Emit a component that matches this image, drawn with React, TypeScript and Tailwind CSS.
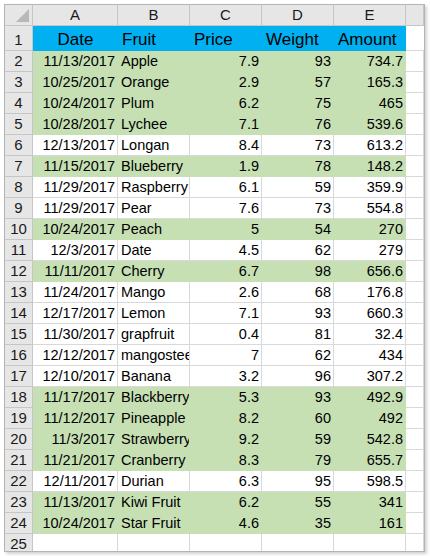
import React from 'react';

type Row = [string, string, string, string, string, boolean];

// date, fruit, price, weight, amount, highlighted
const rows: Row[] = [
  ['11/13/2017', 'Apple', '7.9', '93', '734.7', true],
  ['10/25/2017', 'Orange', '2.9', '57', '165.3', true],
  ['10/24/2017', 'Plum', '6.2', '75', '465', true],
  ['10/28/2017', 'Lychee', '7.1', '76', '539.6', true],
  ['12/13/2017', 'Longan', '8.4', '73', '613.2', false],
  ['11/15/2017', 'Blueberry', '1.9', '78', '148.2', true],
  ['11/29/2017', 'Raspberry', '6.1', '59', '359.9', false],
  ['11/29/2017', 'Pear', '7.6', '73', '554.8', false],
  ['10/24/2017', 'Peach', '5', '54', '270', true],
  ['12/3/2017', 'Date', '4.5', '62', '279', false],
  ['11/11/2017', 'Cherry', '6.7', '98', '656.6', true],
  ['11/24/2017', 'Mango', '2.6', '68', '176.8', false],
  ['12/17/2017', 'Lemon', '7.1', '93', '660.3', false],
  ['11/30/2017', 'grapfruit', '0.4', '81', '32.4', false],
  ['12/12/2017', 'mangosteen', '7', '62', '434', false],
  ['12/10/2017', 'Banana', '3.2', '96', '307.2', false],
  ['11/17/2017', 'Blackberry', '5.3', '93', '492.9', true],
  ['11/12/2017', 'Pineapple', '8.2', '60', '492', true],
  ['11/3/2017', 'Strawberry', '9.2', '59', '542.8', true],
  ['11/21/2017', 'Cranberry', '8.3', '79', '655.7', true],
  ['12/11/2017', 'Durian', '6.3', '95', '598.5', false],
  ['11/13/2017', 'Kiwi Fruit', '6.2', '55', '341', true],
  ['10/24/2017', 'Star Fruit', '4.6', '35', '161', true],
];

const cols = 'grid grid-cols-[28px_85px_72px_72px_72px_72px_18px]';

function RowNum({ n, tall }: { n: number; tall?: boolean }) {
  return (
    <div
      className={`flex items-end justify-center border-r border-b border-[#c6c6c6] bg-[#e6e6e6] pb-[1px] text-[15px] leading-[18px] text-[#1a1a1a] ${
        tall ? 'h-[25px]' : 'h-[21px]'
      }`}
    >
      {n}
    </div>
  );
}

function Cell({
  children,
  fill,
  align = 'left',
}: {
  children?: React.ReactNode;
  fill?: boolean;
  align?: 'left' | 'right';
}) {
  return (
    <div
      className={`flex h-[21px] items-end overflow-hidden whitespace-nowrap border-r border-b pb-[1px] text-[14.5px] leading-[18px] text-black ${
        fill ? 'bg-[#c6e0b4] border-[#c6e0b4]' : 'bg-white border-[#d9d9d9]'
      } ${align === 'right' ? 'justify-end pr-[2px]' : 'justify-start pl-[3px]'}`}
    >
      {children}
    </div>
  );
}

export default function App() {
  return (
    <div className="h-[556px] w-[430px] bg-white pt-1 pl-1" style={{ fontFamily: '"Liberation Sans", Arial, sans-serif' }}>
      <div className="h-[548px] w-[421px] overflow-hidden border border-[#b4b4b4] shadow-[2px_2px_3px_rgba(0,0,0,0.18)]">
        {/* column letters */}
        <div className={cols}>
          <div className="relative h-[21px] border-r border-b border-[#c6c6c6] bg-[#e6e6e6]">
            <svg className="absolute right-[3px] bottom-[3px]" width="13" height="13" viewBox="0 0 13 13">
              <polygon points="13,0 13,13 0,13" fill="#b8b8b8" />
            </svg>
          </div>
          {['A', 'B', 'C', 'D', 'E', ''].map((c, i) => (
            <div
              key={i}
              className="flex h-[21px] items-end justify-center border-r border-b border-[#c6c6c6] bg-[#e6e6e6] pb-[1px] text-[15px] leading-[18px] text-[#1a1a1a]"
            >
              {c}
            </div>
          ))}
        </div>

        {/* row 1 - header */}
        <div className={cols}>
          <RowNum n={1} tall />
          <div className="flex h-[25px] items-end justify-center bg-[#00b0f0] pb-[1px] text-[17px] leading-[20px] text-black">
            Date
          </div>
          {['Fruit', 'Price', 'Weight', 'Amount'].map((h) => (
            <div
              key={h}
              className="flex h-[25px] items-end bg-[#00b0f0] pb-[1px] pl-[4px] text-[17px] leading-[20px] text-black"
            >
              {h}
            </div>
          ))}
          <div className="h-[25px] border-b border-[#d9d9d9] bg-white" />
        </div>

        {rows.map((r, i) => (
          <div key={i} className={cols}>
            <RowNum n={i + 2} />
            <Cell fill={r[5]} align="right">{r[0]}</Cell>
            <Cell fill={r[5]}>{r[1]}</Cell>
            <Cell fill={r[5]} align="right">{r[2]}</Cell>
            <Cell fill={r[5]} align="right">{r[3]}</Cell>
            <Cell fill={r[5]} align="right">{r[4]}</Cell>
            <Cell />
          </div>
        ))}

        {/* row 25 */}
        <div className={cols}>
          <RowNum n={25} />
          <Cell />
          <Cell />
          <Cell />
          <Cell />
          <Cell />
          <Cell />
        </div>
      </div>
    </div>
  );
}
